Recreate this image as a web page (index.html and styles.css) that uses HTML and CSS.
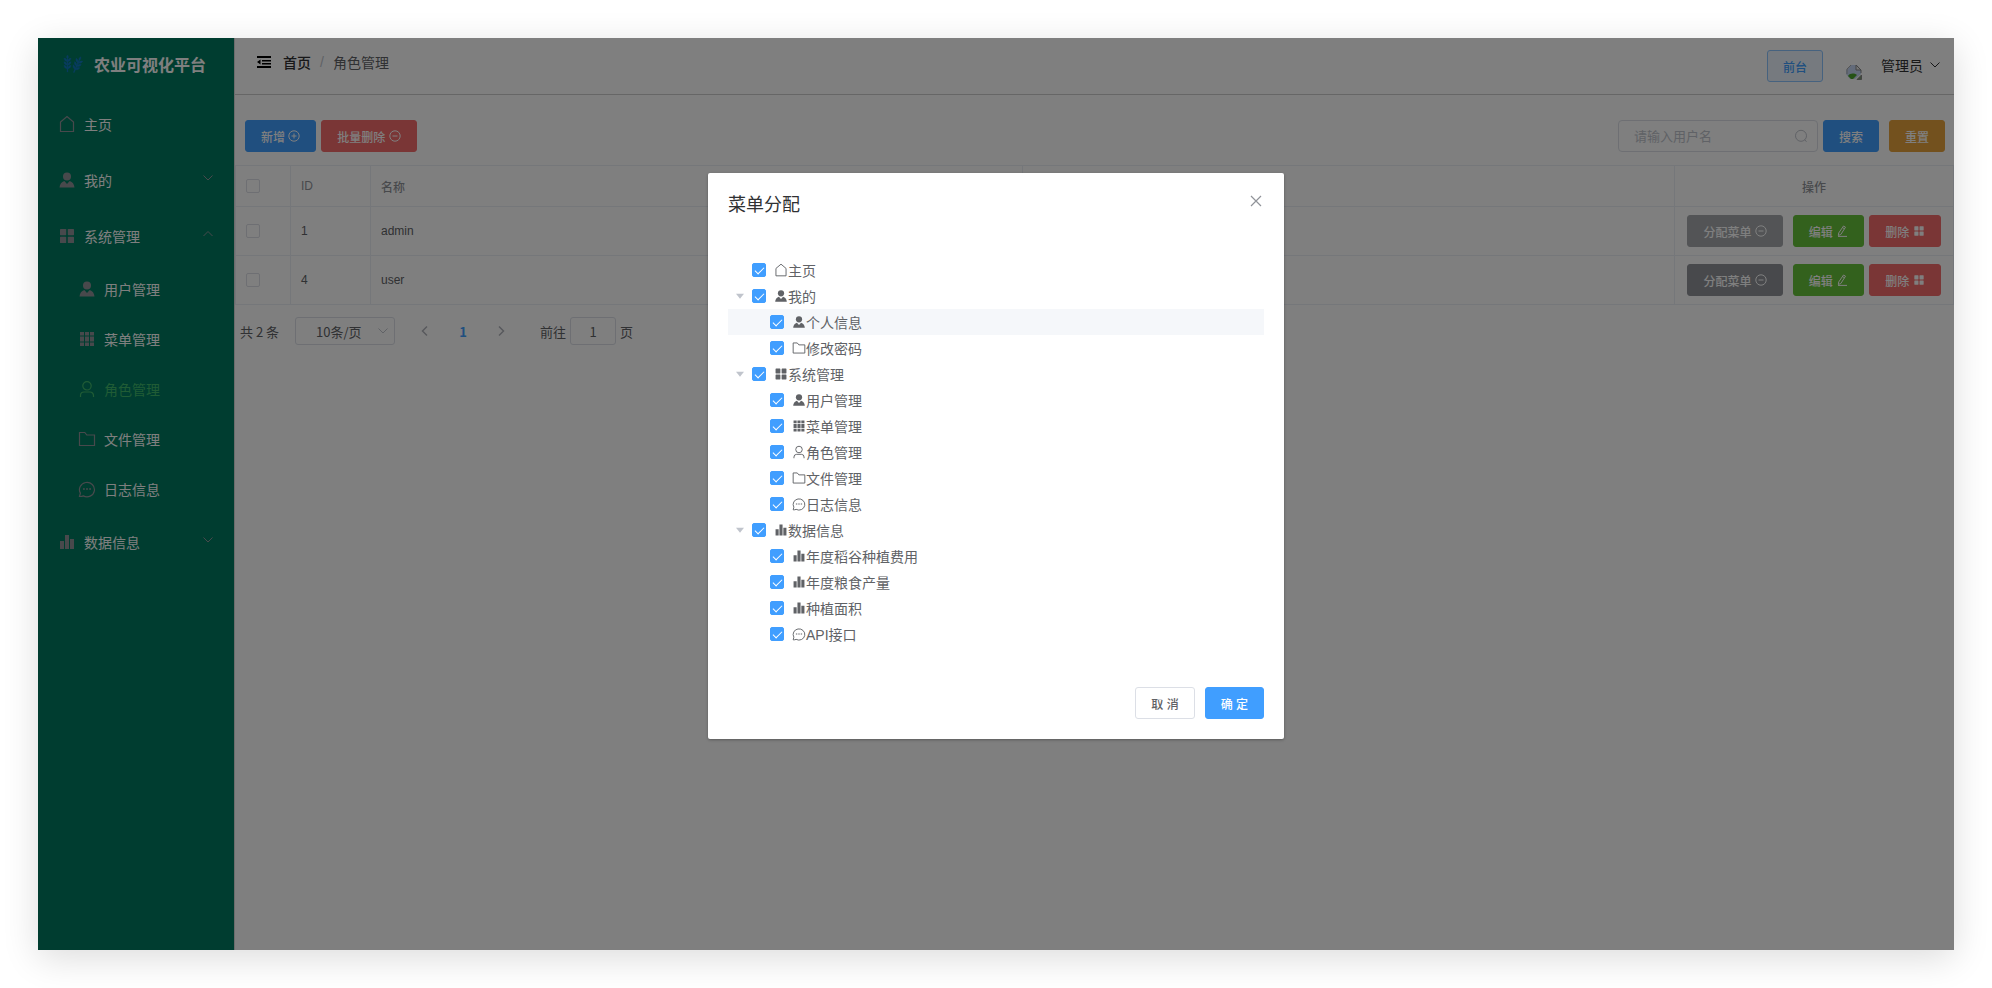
FILE: index.html
```html
<!DOCTYPE html>
<html lang="zh-CN">
<head>
<meta charset="utf-8">
<title>农业可视化平台</title>
<link rel="stylesheet" href="styles.css">
</head>
<body>
<svg class="sprite" aria-hidden="true">
  <symbol id="home" viewBox="0 0 18 18"><path d="M2.500 16.500V7L9 1.500 15.500 7v9.500z" fill="none" stroke="currentColor" stroke-width="1.200"/></symbol>
  <symbol id="user-solid" viewBox="0 0 18 18"><circle cx="9" cy="5.500" r="4" fill="currentColor"/><path d="M1.500 16.500c.3-3.700 2-5.700 4.800-6.600L9 13l2.700-3.100c2.800.9 4.500 2.900 4.800 6.600z" fill="currentColor"/></symbol>
  <symbol id="menu" viewBox="0 0 18 18"><g fill="currentColor"><rect x="2" y="2" width="6.200" height="6.200" rx=".6"/><rect x="9.800" y="2" width="6.200" height="6.200" rx=".6"/><rect x="2" y="9.800" width="6.200" height="6.200" rx=".6"/><rect x="9.800" y="9.800" width="6.200" height="6.200" rx=".6"/></g></symbol>
  <symbol id="grid" viewBox="0 0 18 18"><path fill="currentColor" d="M2 2h4v3.500H2zM7 2h4v3.500H7zM12 2h4v3.500h-4zM2 6.500h4v5H2zM7 6.500h4v5H7zM12 6.500h4v5h-4zM2 12.500h4V16H2zM7 12.500h4V16H7zM12 12.500h4V16h-4z"/></symbol>
  <symbol id="user" viewBox="0 0 18 18"><g fill="none" stroke="currentColor" stroke-width="1.200"><circle cx="9" cy="5.800" r="4.200"/><path d="M2.500 17v-1.500a3.500 3.500 0 0 1 3.500-3.500h6a3.500 3.500 0 0 1 3.500 3.500V17"/></g></symbol>
  <symbol id="folder" viewBox="0 0 18 18"><path d="M1.500 2.500h5.300l2 2.500h7.700v10.500h-15z" fill="none" stroke="currentColor" stroke-width="1.200"/></symbol>
  <symbol id="chat" viewBox="0 0 18 18"><path d="M1.500 16.500l.9-3.400A7.500 7.200 0 1 1 5.300 15.900c-1 .5-2.200.7-3.800.6z" fill="none" stroke="currentColor" stroke-width="1.200"/><path d="M5 8.200h1.800v1.500H5zM8.100 8.200h1.800v1.500H8.100zM11.200 8.200H13v1.500h-1.800z" fill="currentColor"/></symbol>
  <symbol id="data" viewBox="0 0 18 18"><path d="M2 8h4v8H2zM7 2h4v14H7zM12 6h4v10h-4z" fill="currentColor"/></symbol>
  <symbol id="down" viewBox="0 0 12 12"><path d="M1.500 3.500L6 8l4.500-4.500" fill="none" stroke="currentColor"/></symbol>
  <symbol id="up" viewBox="0 0 12 12"><path d="M1.500 8L6 3.500 10.500 8" fill="none" stroke="currentColor"/></symbol>
  <symbol id="left" viewBox="0 0 12 12"><path d="M8 1.500L3.500 6 8 10.500" fill="none" stroke="currentColor" stroke-width="1.500"/></symbol>
  <symbol id="right" viewBox="0 0 12 12"><path d="M4 1.500L8.500 6 4 10.500" fill="none" stroke="currentColor" stroke-width="1.500"/></symbol>
  <symbol id="plus" viewBox="0 0 12 12"><circle cx="6" cy="6" r="5.200" fill="none" stroke="currentColor"/><path d="M3.500 6h5M6 3.500v5" stroke="currentColor"/></symbol>
  <symbol id="minus" viewBox="0 0 12 12"><circle cx="6" cy="6" r="5.200" fill="none" stroke="currentColor"/><path d="M3.500 6h5" stroke="currentColor"/></symbol>
  <symbol id="edit" viewBox="0 0 12 12"><path d="M7.500 1l2 1.200-4.700 7.300-2.500 1 .4-2.500zM6.500 2.600l2 1.200M2 11.400h9" fill="none" stroke="currentColor"/></symbol>
  <symbol id="search" viewBox="0 0 14 14"><circle cx="7" cy="6.800" r="5.500" fill="none" stroke="currentColor"/><path d="M10.500 10.500l2 2.300" stroke="currentColor"/></symbol>
  <symbol id="close" viewBox="0 0 16 16"><path d="M3 3l10 10M13 3L3 13" stroke="currentColor" stroke-width="1.200"/></symbol>
  <symbol id="fold" viewBox="0 0 14 14"><path d="M0 1h14v2H0zM5 5h9v1.500H5zM5 8h9v1.500H5zM0 11h14v2H0zM0 7l3.500-2.500v5z" fill="currentColor"/></symbol>
  <symbol id="caret" viewBox="0 0 12 12"><path d="M2 3.700h8L6 8.700z" fill="currentColor"/></symbol>
  <symbol id="ear" viewBox="0 0 10 20"><path d="M5 .5c1.300 1.500 1.300 3 0 4.500-1.300-1.500-1.300-3 0-4.500zM1 4c2.200.3 3.400 1.500 3.600 3.800C2.400 7.500 1.200 6.300 1 4zM9 4c-2.200.3-3.400 1.500-3.600 3.800C7.600 7.500 8.800 6.300 9 4zM1 8c2.200.3 3.400 1.500 3.600 3.800-2.200-.3-3.400-1.500-3.600-3.800zM9 8c-2.200.3-3.400 1.500-3.600 3.800 2.200-.3 3.400-1.500 3.600-3.800zM1 12c2.200.3 3.400 1.500 3.600 3.800-2.200-.3-3.400-1.500-3.600-3.800zM9 12c-2.200.3-3.400 1.500-3.600 3.800 2.200-.3 3.400-1.500 3.600-3.800zM4.500 5h1v14.500h-1z" fill="currentColor" stroke="currentColor" stroke-width=".4"/></symbol>
  <symbol id="wheat" viewBox="0 0 20 20"><use href="#ear" x="0" y="0" width="9" height="19"/><g transform="rotate(24 14 10)"><use href="#ear" x="10" y="1" width="9" height="19"/></g></symbol>
</svg>
<div class="app">
  <aside class="sidebar">
    <h1 class="brand"><svg class="brand-icon"><use href="#wheat"/></svg>农业可视化平台</h1>
    <nav class="nav">
      <a class="nav-item" href="#"><svg class="nav-icon"><use href="#home"/></svg>主页</a>
      <a class="nav-item" href="#"><svg class="nav-icon"><use href="#user-solid"/></svg>我的<svg class="nav-arrow"><use href="#down"/></svg></a>
      <a class="nav-item" href="#"><svg class="nav-icon"><use href="#menu"/></svg>系统管理<svg class="nav-arrow"><use href="#up"/></svg></a>
      <div class="subnav">
        <a class="nav-item" href="#"><svg class="nav-icon"><use href="#user-solid"/></svg>用户管理</a>
        <a class="nav-item" href="#"><svg class="nav-icon"><use href="#grid"/></svg>菜单管理</a>
        <a class="nav-item active" href="#"><svg class="nav-icon"><use href="#user"/></svg>角色管理</a>
        <a class="nav-item" href="#"><svg class="nav-icon"><use href="#folder"/></svg>文件管理</a>
        <a class="nav-item" href="#"><svg class="nav-icon"><use href="#chat"/></svg>日志信息</a>
      </div>
      <a class="nav-item" href="#"><svg class="nav-icon"><use href="#data"/></svg>数据信息<svg class="nav-arrow"><use href="#down"/></svg></a>
    </nav>
  </aside>
  <main class="main">
    <header class="topbar">
      <div class="crumbs">
        <svg class="icon-14"><use href="#fold"/></svg>
        <a class="crumb-home" href="#">首页</a><span class="slash">/</span><span>角色管理</span>
      </div>
      <div class="account">
        <button class="btn plain" type="button">前台</button>
        <svg class="avatar" viewBox="0 0 16 16"><path d="M5 1h6l4 5v4L9 15H4L0 10V6z" fill="#c6d7f5"/><path d="M2 12c2-3 6-3 9-1l-4 4H5z" fill="#4aa52e"/><path d="M10 1l5 5v3" fill="none" stroke="#888"/><path d="M10 1v5h5z" fill="#eee" stroke="#888"/><path d="M15.500 11v4.500H11z" fill="#7a9a70" stroke="#888"/><path d="M5 1L1 5v5" fill="none" stroke="#aaa"/></svg>
        <span class="who">管理员<svg class="icon-12"><use href="#down"/></svg></span>
      </div>
    </header>
    <div class="toolbar">
      <button class="btn primary" type="button">新增 <svg class="icon-12"><use href="#plus"/></svg></button>
      <button class="btn danger" type="button">批量删除 <svg class="icon-12"><use href="#minus"/></svg></button>
      <div class="search">
        <label class="field"><input class="search-input" type="text" placeholder="请输入用户名" aria-label="用户名"><svg class="field-icon"><use href="#search"/></svg></label>
        <button class="btn primary" type="button">搜索</button>
        <button class="btn warning spaced" type="button">重置</button>
      </div>
    </div>
    <table class="grid">
      <colgroup><col class="col-check"><col class="col-id"><col><col><col class="col-ops"></colgroup>
      <thead><tr><th><input class="check" type="checkbox" aria-label="全选"></th><th>ID</th><th>名称</th><th></th><th class="ops">操作</th></tr></thead>
      <tbody>
        <tr><td><input class="check" type="checkbox" aria-label="admin"></td><td>1</td><td>admin</td><td></td>
          <td><div class="actions"><button class="btn info hover" type="button">分配菜单 <svg class="icon-12"><use href="#minus"/></svg></button><button class="btn success spaced" type="button">编辑 <svg class="icon-12"><use href="#edit"/></svg></button><button class="btn danger" type="button">删除 <svg class="icon-12"><use href="#menu"/></svg></button></div></td></tr>
        <tr><td><input class="check" type="checkbox" aria-label="user"></td><td>4</td><td>user</td><td></td>
          <td><div class="actions"><button class="btn info" type="button">分配菜单 <svg class="icon-12"><use href="#minus"/></svg></button><button class="btn success spaced" type="button">编辑 <svg class="icon-12"><use href="#edit"/></svg></button><button class="btn danger" type="button">删除 <svg class="icon-12"><use href="#menu"/></svg></button></div></td></tr>
      </tbody>
    </table>
    <div class="pager">
      <span>共 2 条</span>
      <label class="size-field"><select class="size-select" aria-label="每页条数"><option>10条/页</option></select><svg class="size-arrow"><use href="#down"/></svg></label>
      <div class="pages">
        <button class="page-btn" type="button" aria-label="上一页"><svg class="icon-12"><use href="#left"/></svg></button>
        <button class="page-btn current" type="button">1</button>
        <button class="page-btn" type="button" aria-label="下一页"><svg class="icon-12"><use href="#right"/></svg></button>
      </div>
      <label class="jump">前往<input class="jump-input" type="text" value="1">页</label>
    </div>
  </main>
  <div class="overlay">
    <section class="dialog" role="dialog" aria-label="菜单分配">
      <header class="dialog-head"><h2 class="dialog-title">菜单分配</h2><button class="close" type="button" aria-label="关闭"><svg class="icon-16"><use href="#close"/></svg></button></header>
      <div class="tree">
        <label class="node"><span class="caret"></span><input class="check" type="checkbox" checked><svg class="icon-14"><use href="#home"/></svg>主页</label>
        <label class="node"><svg class="caret"><use href="#caret"/></svg><input class="check" type="checkbox" checked><svg class="icon-14"><use href="#user-solid"/></svg>我的</label>
        <label class="node child hovered"><span class="caret"></span><input class="check" type="checkbox" checked><svg class="icon-14"><use href="#user-solid"/></svg>个人信息</label>
        <label class="node child"><span class="caret"></span><input class="check" type="checkbox" checked><svg class="icon-14"><use href="#folder"/></svg>修改密码</label>
        <label class="node"><svg class="caret"><use href="#caret"/></svg><input class="check" type="checkbox" checked><svg class="icon-14"><use href="#menu"/></svg>系统管理</label>
        <label class="node child"><span class="caret"></span><input class="check" type="checkbox" checked><svg class="icon-14"><use href="#user-solid"/></svg>用户管理</label>
        <label class="node child"><span class="caret"></span><input class="check" type="checkbox" checked><svg class="icon-14"><use href="#grid"/></svg>菜单管理</label>
        <label class="node child"><span class="caret"></span><input class="check" type="checkbox" checked><svg class="icon-14"><use href="#user"/></svg>角色管理</label>
        <label class="node child"><span class="caret"></span><input class="check" type="checkbox" checked><svg class="icon-14"><use href="#folder"/></svg>文件管理</label>
        <label class="node child"><span class="caret"></span><input class="check" type="checkbox" checked><svg class="icon-14"><use href="#chat"/></svg>日志信息</label>
        <label class="node"><svg class="caret"><use href="#caret"/></svg><input class="check" type="checkbox" checked><svg class="icon-14"><use href="#data"/></svg>数据信息</label>
        <label class="node child"><span class="caret"></span><input class="check" type="checkbox" checked><svg class="icon-14"><use href="#data"/></svg>年度稻谷种植费用</label>
        <label class="node child"><span class="caret"></span><input class="check" type="checkbox" checked><svg class="icon-14"><use href="#data"/></svg>年度粮食产量</label>
        <label class="node child"><span class="caret"></span><input class="check" type="checkbox" checked><svg class="icon-14"><use href="#data"/></svg>种植面积</label>
        <label class="node child"><span class="caret"></span><input class="check" type="checkbox" checked><svg class="icon-14"><use href="#chat"/></svg>API接口</label>
      </div>
      <footer class="dialog-foot"><button class="btn" type="button">取 消</button><button class="btn primary" type="button">确 定</button></footer>
    </section>
  </div>
</div>
</body>
</html>
```
FILE: styles.css
```css
* { box-sizing: border-box; }
body {
  margin: 0;
  padding: 38px;
  background: #fff;
  color: #606266;
  font: 14px "Liberation Sans", "Noto Sans CJK SC", sans-serif;
}
button, input, select { font-family: inherit; }
a { color: inherit; text-decoration: none; }
svg { flex: none; }
.sprite { position: absolute; width: 0; height: 0; }
.icon-12 { width: 12px; height: 12px; }
.icon-14 { width: 14px; height: 14px; }
.icon-16 { width: 16px; height: 16px; }

.app {
  position: relative;
  display: flex;
  min-height: calc(100vh - 76px);
  box-shadow: 0 8px 34px rgba(0, 0, 0, .14);
}

/* sidebar */
.sidebar { flex: none; width: 196px; background: #007a60; color: #fff; }
.brand {
  display: flex;
  align-items: center;
  gap: 11px;
  height: 58px;
  margin: 0;
  padding: 0 0 6px 25px;
  font-size: 16px;
}
.brand-icon { width: 20px; height: 20px; color: #1279c0; }
.nav-item { display: flex; align-items: center; height: 56px; padding: 0 20px; }
.subnav .nav-item { height: 50px; padding-left: 40px; }
.nav-icon { width: 18px; height: 18px; margin-right: 8px; color: #909399; }
.nav-arrow { width: 12px; height: 12px; margin: 0 0 4px auto; color: #909399; }
.active, .active .nav-icon { color: #40b86b; }

/* top bar */
.main { flex: 1; min-width: 0; border-left: 1px solid #d8d8d8; }
.topbar {
  display: flex;
  align-items: center;
  justify-content: space-between;
  height: 57px;
  padding: 0 13px 0 22px;
  border-bottom: 1px solid #ccc;
}
.crumbs { display: flex; align-items: center; height: 42px; margin-bottom: 8px; color: #606266; }
.crumbs .icon-14 { margin-right: 12px; color: #000; }
.crumb-home { color: #303133; font-weight: 500; }
.slash { width: 22px; color: #c0c4cc; text-align: center; }
.account { display: flex; align-items: center; color: #606266; }
.avatar { width: 16px; height: 16px; margin: 12px 19px 0 23px; }
.who { display: flex; align-items: center; gap: 6px; margin-bottom: 2px; color: #303133; }

/* buttons */
.btn {
  display: inline-flex;
  align-items: center;
  height: 32px;
  padding: 0 15px;
  border: 1px solid #dcdfe6;
  border-radius: 3px;
  background: #fff;
  color: #606266;
  font-size: 12px;
  font-weight: 500;
  white-space: pre;
}
.primary { background: #409eff; border-color: #409eff; color: #fff; }
.plain { background: #ecf5ff; border-color: #8cc5ff; color: #409eff; }
.danger { background: #f56c6c; border-color: #f56c6c; color: #fff; }
.warning { background: #e6a23c; border-color: #e6a23c; color: #fff; }
.success { background: #67c23a; border-color: #67c23a; color: #fff; }
.info { background: #909399; border-color: #909399; color: #fff; }
.info.hover { background: #a6a9ad; border-color: #a6a9ad; }
.spaced { margin-left: 5px; }

/* toolbar */
.toolbar { display: flex; gap: 5px; padding: 25px 9px 13px 10px; }
.search { display: flex; gap: 5px; margin-left: auto; }
.field { position: relative; display: flex; }
.search-input {
  width: 200px;
  height: 32px;
  padding: 0 30px 0 15px;
  border: 1px solid #dcdfe6;
  border-radius: 4px;
  font-size: 13px;
}
.search-input::placeholder { color: #c0c4cc; }
.field-icon { position: absolute; top: 9px; right: 10px; width: 14px; height: 14px; color: #c0c4cc; }

/* table */
.grid {
  width: 100%;
  table-layout: fixed;
  border: 0 solid #ebeef5;
  border-width: 1px 0 0 1px;
  border-spacing: 0;
  font-size: 12px;
}
.col-check { width: 55px; }
.col-id { width: 80px; }
.col-ops { width: 279px; }
.grid th, .grid td {
  height: 41px;
  padding: 0 10px;
  border: 0 solid #ebeef5;
  border-width: 0 1px 1px 0;
  text-align: left;
}
.grid td { height: 49px; }
.grid th { color: #909399; font-weight: 500; }
.grid .ops { text-align: center; }
.actions { display: flex; justify-content: center; gap: 5px; }
.check {
  display: block;
  flex: none;
  position: relative;
  width: 14px;
  height: 14px;
  margin: 0;
  border: 1px solid #dcdfe6;
  border-radius: 2px;
  background: #fff;
  appearance: none;
}
.check:checked { border-color: #409eff; background: #409eff; }
.check:checked::after {
  content: "";
  position: absolute;
  top: 1px;
  left: 4px;
  width: 4px;
  height: 8px;
  border: solid #fff;
  border-width: 0 1px 1px 0;
  transform: rotate(45deg);
}

/* pagination */
.pager {
  display: flex;
  align-items: center;
  padding: 12px 5px;
  font-family: "Noto Sans CJK SC", sans-serif;
  font-size: 13px;
}
.size-field { position: relative; margin-left: 16px; }
.size-select {
  display: block;
  width: 100px;
  height: 28px;
  padding: 0 20px;
  border: 1px solid #dcdfe6;
  border-radius: 3px;
  background: #fff;
  color: #606266;
  font-size: 13px;
  appearance: none;
}
.size-arrow { position: absolute; top: 8px; right: 6px; width: 12px; height: 12px; color: #c0c4cc; }
.pages { display: flex; gap: 8px; margin: 0 24px 0 15px; }
.page-btn {
  display: flex;
  align-items: center;
  justify-content: center;
  width: 30px;
  height: 28px;
  padding: 0;
  border: 0;
  background: none;
  color: #b0b3ba;
  font-size: 13px;
}
.current { color: #409eff; font-weight: 700; }
.jump { display: flex; align-items: center; gap: 4px; }
.jump-input {
  width: 46px;
  height: 28px;
  padding: 0;
  border: 1px solid #dcdfe6;
  border-radius: 3px;
  color: #606266;
  font-size: 13px;
  text-align: center;
}

/* dialog */
.overlay { position: absolute; inset: 0; background: rgba(0, 0, 0, .5); }
.dialog {
  width: 576px;
  max-width: 100%;
  margin: 135px auto 0;
  border-radius: 2px;
  background: #fff;
  box-shadow: 0 1px 3px rgba(0, 0, 0, .3);
}
.dialog-head { display: flex; justify-content: space-between; padding: 20px 20px 10px; }
.dialog-title { margin: 0; color: #303133; font-size: 18px; font-weight: 400; line-height: 24px; }
.close { height: 16px; padding: 0; border: 0; background: none; color: #909399; }
.tree { padding: 30px 20px; }
.node { display: flex; align-items: center; height: 26px; }
.child { padding-left: 18px; }
.hovered { background: #f5f7fa; }
.caret { flex: none; width: 12px; height: 12px; margin: 0 6px; color: #c0c4cc; }
.node .check { margin-right: 8px; }
.dialog-foot { display: flex; justify-content: flex-end; gap: 10px; padding: 10px 20px 20px; }
```
